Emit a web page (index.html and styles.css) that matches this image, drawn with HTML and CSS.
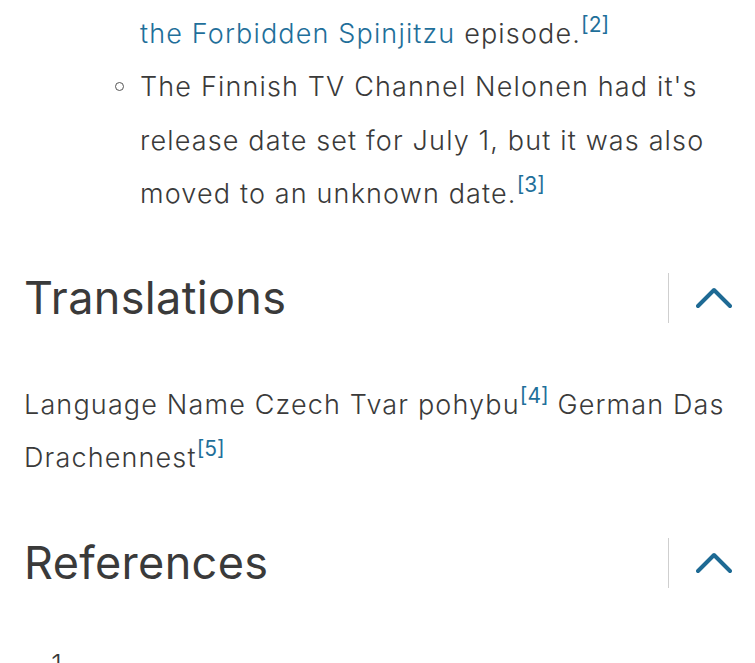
FILE: index.html
```html
<!DOCTYPE html>
<html lang="en">
<head>
<meta charset="utf-8">
<title>Article</title>
<link rel="stylesheet" href="styles.css">
</head>
<body>
<main class="content">
  <ul class="outer">
    <li class="outer-item">
      <ul class="inner">
        <li class="cont"><a class="link" href="#">the Forbidden Spinjitzu</a> episode.<sup class="ref"><a href="#">[2]</a></sup></li>
        <li class="bullet">The Finnish TV Channel Nelonen had it's release date set for July 1, but it was also moved to an unknown date.<sup class="ref"><a href="#">[3]</a></sup></li>
      </ul>
    </li>
  </ul>

  <section class="section">
    <div class="section-head">
      <h2 class="section-title">Translations</h2>
      <div class="toggle">
        <span class="divider"></span>
        <svg class="chevron" width="36" height="22" viewBox="0 0 36 22" aria-hidden="true"><path d="M2 19 L18 3 L34 19" fill="none" stroke="#1e6a94" stroke-width="4" stroke-linecap="round" stroke-linejoin="round"/></svg>
      </div>
    </div>
    <p class="para">Language Name Czech Tvar pohybu<sup class="ref"><a href="#">[4]</a></sup> German Das Drachennest<sup class="ref"><a href="#">[5]</a></sup></p>
  </section>

  <section class="section">
    <div class="section-head">
      <h2 class="section-title">References</h2>
      <div class="toggle">
        <span class="divider"></span>
        <svg class="chevron" width="36" height="22" viewBox="0 0 36 22" aria-hidden="true"><path d="M2 19 L18 3 L34 19" fill="none" stroke="#1e6a94" stroke-width="4" stroke-linecap="round" stroke-linejoin="round"/></svg>
      </div>
    </div>
    <ol class="refs">
      <li><a class="up" href="#">↑</a></li>
    </ol>
  </section>
</main>
</body>
</html>
```
FILE: styles.css
```css
html, body {
  margin: 0;
  padding: 0;
  background: #ffffff;
}
body {
  font-family: Inter, Roboto, sans-serif;
  font-weight: 300;
  font-size: 27px;
  letter-spacing: 1.15px;
  line-height: 53.3px;
  color: #3a3a3a;
  overflow: hidden;
}
.content {
  padding: 7px 24px 0 24px;
}
a {
  color: #1f6f9a;
  text-decoration: none;
}
.outer {
  list-style: none;
  margin: 0;
  padding: 0;
}
.inner {
  list-style: none;
  margin: 0;
  padding: 0 0 0 116px;
}
.bullet {
  position: relative;
}
.bullet::before {
  content: "";
  position: absolute;
  left: -25px;
  top: 22px;
  width: 7px;
  height: 7px;
  border: 1.5px solid #555;
  border-radius: 50%;
}
.ref {
  font-size: 21px;
  letter-spacing: 0;
  line-height: 1;
  vertical-align: 11px;
  font-weight: 400;
}
.section {
  margin-top: 53px;
}
.section-head {
  display: flex;
  align-items: center;
  justify-content: space-between;
  height: 50px;
}
.section-title {
  margin: 0;
  font-size: 45px;
  font-weight: 400;
  line-height: 50px;
  letter-spacing: 0.35px;
  color: #3a3a3a;
}
.toggle {
  display: flex;
  align-items: center;
  gap: 27px;
  height: 50px;
}
.divider {
  width: 1px;
  height: 50px;
  background: #cfcfcf;
}
.chevron {
  display: block;
  margin-right: -1px;
}
.para {
  margin: 55px 0 0 0;
}
.refs {
  margin: 50px 0 0 0;
  padding-left: 25px;
}
.refs li::marker {
  content: "1";
}
.refs li {
  list-style-position: inside;
}
.up {
  font-size: 14px;
  margin-left: 14px;
}
```
